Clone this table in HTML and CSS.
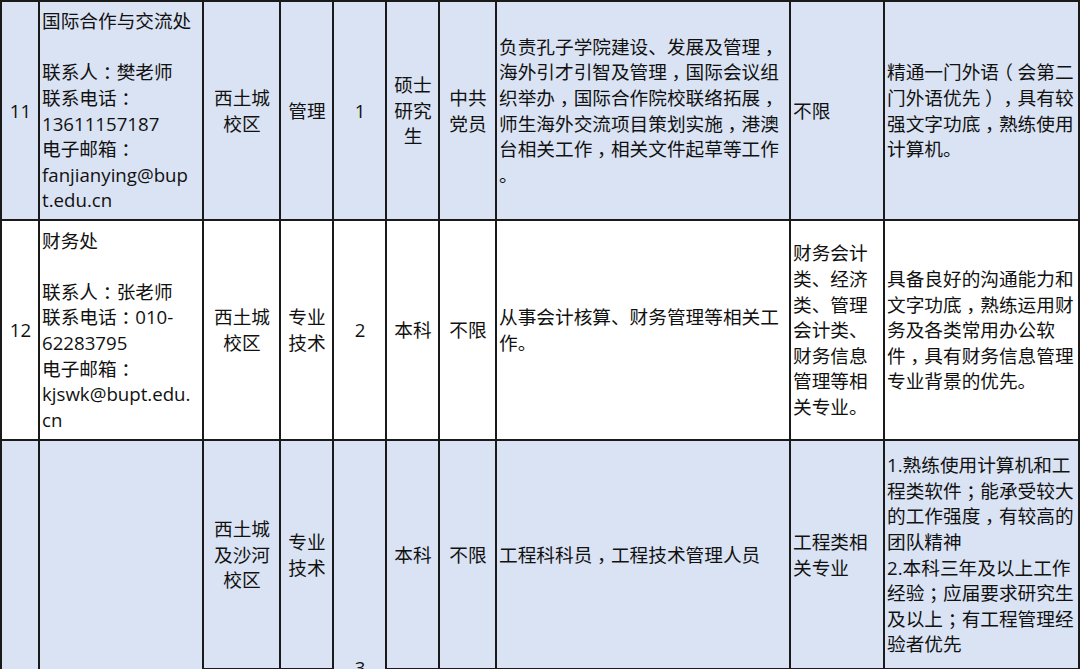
FILE: index.html
```html
<!DOCTYPE html>
<html lang="zh-CN">
<head>
<meta charset="utf-8">
<title>岗位信息表</title>
<link rel="stylesheet" href="styles.css">
</head>
<body>
<table class="grid">
  <colgroup>
    <col class="w-num">
    <col class="w-dept">
    <col class="w-campus">
    <col class="w-type">
    <col class="w-count">
    <col class="w-edu">
    <col class="w-party">
    <col class="w-duty">
    <col class="w-major">
    <col class="w-req">
  </colgroup>
  <tr class="row row-a tinted">
    <td class="mid">11</td>
    <td class="left">国际合作与交流处<br><br>联系人<span class="pu">：</span>樊老师<br>联系电话<span class="pu">：</span><br>13611157187<br>电子邮箱<span class="pu">：</span><br>fanjianying@bup<br>t.edu.cn</td>
    <td class="mid">西土城<br>校区</td>
    <td class="mid">管理</td>
    <td class="mid">1</td>
    <td class="mid">硕士<br>研究<br>生</td>
    <td class="mid">中共<br>党员</td>
    <td class="left">负责孔子学院建设、发展及管理<span class="pu">，</span><br>海外引才引智及管理<span class="pu">，</span>国际会议组<br>织举办<span class="pu">，</span>国际合作院校联络拓展<span class="pu">，</span><br>师生海外交流项目策划实施<span class="pu">，</span>港澳<br>台相关工作<span class="pu">，</span>相关文件起草等工作<br>。</td>
    <td class="left">不限</td>
    <td class="left">精通一门外语<span class="pu">（</span>会第二<br>门外语优先<span class="pu">）</span><span class="pu">，</span>具有较<br>强文字功底<span class="pu">，</span>熟练使用<br>计算机。</td>
  </tr>
  <tr class="row row-b">
    <td class="mid">12</td>
    <td class="left">财务处<br><br>联系人<span class="pu">：</span>张老师<br>联系电话<span class="pu">：</span>010-<br>62283795<br>电子邮箱<span class="pu">：</span><br>kjswk@bupt.edu.<br>cn</td>
    <td class="mid">西土城<br>校区</td>
    <td class="mid">专业<br>技术</td>
    <td class="mid">2</td>
    <td class="mid">本科</td>
    <td class="mid">不限</td>
    <td class="left">从事会计核算、财务管理等相关工<br>作。</td>
    <td class="left">财务会计<br>类、经济<br>类、管理<br>会计类、<br>财务信息<br>管理等相<br>关专业。</td>
    <td class="left">具备良好的沟通能力和<br>文字功底<span class="pu">，</span>熟练运用财<br>务及各类常用办公软<br>件<span class="pu">，</span>具有财务信息管理<br>专业背景的优先。</td>
  </tr>
  <tr class="row row-c tinted">
    <td class="mid" rowspan="2"></td>
    <td class="left" rowspan="2"></td>
    <td class="mid">西土城<br>及沙河<br>校区</td>
    <td class="mid">专业<br>技术</td>
    <td class="mid" rowspan="2">3</td>
    <td class="mid">本科</td>
    <td class="mid">不限</td>
    <td class="left">工程科科员<span class="pu">，</span>工程技术管理人员</td>
    <td class="left">工程类相<br>关专业</td>
    <td class="left">1.熟练使用计算机和工<br>程类软件<span class="pu">；</span>能承受较大<br>的工作强度<span class="pu">，</span>有较高的<br>团队精神<br>2.本科三年及以上工作<br>经验<span class="pu">；</span>应届要求研究生<br>及以上<span class="pu">；</span>有工程管理经<br>验者优先</td>
  </tr>
  <tr class="row row-d tinted">
    <td class="mid"></td>
    <td class="mid"></td>
    <td class="mid"></td>
    <td class="mid"></td>
    <td class="left"></td>
    <td class="left"></td>
    <td class="left"></td>
  </tr>
</table>
</body>
</html>
```

FILE: styles.css
```css
html, body {
  margin: 0;
  padding: 0;
  background: #ffffff;
  overflow: hidden;
}

.grid {
  border-collapse: collapse;
  table-layout: fixed;
  width: 1078px;
  font-family: "Open Sans", "Noto Sans CJK SC", sans-serif;
  font-size: 18.67px;
  line-height: 25.6px;
  color: #111111;
}

.w-num { width: 38px; }
.w-dept { width: 164px; }
.w-campus { width: 77px; }
.w-type { width: 53px; }
.w-count { width: 53px; }
.w-edu { width: 53px; }
.w-party { width: 57px; }
.w-duty { width: 294px; }
.w-major { width: 94px; }
.w-req { width: 195px; }

.grid td {
  border: 2px solid #1a1a1a;
  padding: 0 1px 0 2px;
  vertical-align: middle;
  white-space: nowrap;
  overflow: hidden;
}

.row-a { height: 219px; }
.row-b { height: 220px; }
.row-c { height: 229px; }
.row-d { height: 226px; }

.tinted td { background: #dae3f3; }

.mid { text-align: center; }
.left { text-align: left; }

/* full-width punctuation drawn centred in its em box */
.pu {
  display: inline-block;
  width: 1em;
  text-align: center;
  font-feature-settings: "halt" 1;
}
```
